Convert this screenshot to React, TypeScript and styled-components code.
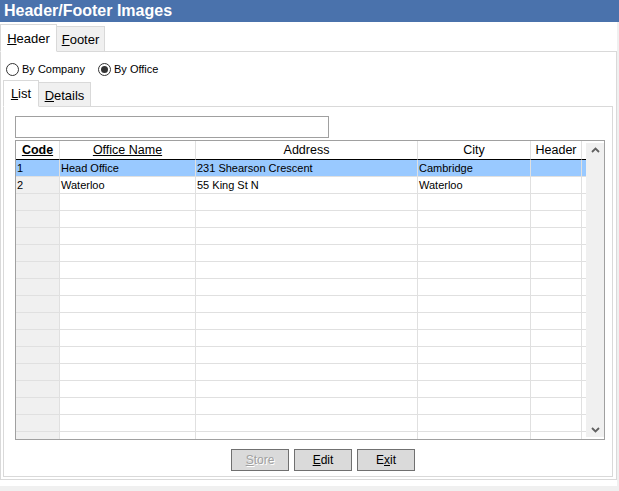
import React from "react";
import styled, { createGlobalStyle } from "styled-components";

const Global = createGlobalStyle`
  html, body { margin: 0; padding: 0; background: #ffffff; }
  body { font-family: "Liberation Sans", Arial, sans-serif; color: #000; }
  * { box-sizing: border-box; }
`;

const Page = styled.div`
  width: 619px;
  height: 491px;
  background: #f0f0f0;
  display: flex;
  flex-direction: column;
  overflow: hidden;
`;

const TitleBar = styled.div`
  height: 22px;
  background: #4a72ac;
  color: #fff;
  font-weight: bold;
  font-size: 16px;
  line-height: 22px;
  padding-left: 4px;
  white-space: nowrap;
`;

const Window = styled.div`
  width: 617px;
  height: 464px;
  background: #fff;
  display: flex;
  flex-direction: column;
`;

const TabStrip = styled.div<{ $h: number }>`
  display: flex;
  align-items: flex-end;
  height: ${(p) => p.$h}px;
  flex: none;
`;

const Tab = styled.div<{ $active?: boolean; $w: number; $h: number; $first?: boolean; $fs: number }>`
  width: ${(p) => p.$w}px;
  height: ${(p) => p.$h}px;
  background: ${(p) => (p.$active ? "#fff" : "#f0f0f0")};
  border-top: 1px solid #d9d9d9;
  border-right: 1px solid #d9d9d9;
  border-left: ${(p) => (p.$first ? "1px solid #d9d9d9" : "none")};
  border-bottom: 1px solid ${(p) => (p.$active ? "#fff" : "#d9d9d9")};
  font-size: ${(p) => p.$fs}px;
  display: flex;
  align-items: center;
  justify-content: center;
  padding-top: ${(p) => (p.$active ? 0 : 1)}px;
  white-space: nowrap;
`;

const TabFiller = styled.div`
  flex: 1;
  height: 1px;
  border-bottom: 1px solid #d9d9d9;
`;

const OuterPanel = styled.div`
  height: 428px;
  border: 1px solid #d9d9d9;
  border-top: none;
  padding: 0 3px 2px 2px;
  display: flex;
  flex-direction: column;
`;

const RadioRow = styled.div`
  display: flex;
  align-items: center;
  height: 14px;
  margin: 10px 0 4px 3px;
  font-size: 11px;
`;

const RadioItem = styled.label`
  display: flex;
  align-items: center;
  gap: 3px;
  margin-right: 13px;
`;

const RadioCircle = styled.span<{ $checked?: boolean }>`
  width: 13px;
  height: 13px;
  border-radius: 50%;
  border: 1px solid #333;
  background: #fff;
  display: flex;
  align-items: center;
  justify-content: center;
  &::after {
    content: "";
    width: 7px;
    height: 7px;
    border-radius: 50%;
    background: ${(p) => (p.$checked ? "#333" : "transparent")};
  }
`;

const InnerPanel = styled.div`
  flex: 1;
  border: 1px solid #d9d9d9;
  border-top: none;
  padding: 9px 0 0 11px;
  display: flex;
  flex-direction: column;
`;

const SearchInput = styled.div`
  width: 314px;
  height: 22px;
  border: 1px solid #a0a0a0;
  background: #fff;
  flex: none;
`;

const Grid = styled.div`
  margin-top: 2px;
  width: 590px;
  height: 300px;
  border: 1px solid #a0a0a0;
  display: flex;
  flex: none;
  overflow: hidden;
`;

const Table = styled.div`
  width: 570px;
  display: grid;
  grid-template-columns: 44px 136px 222px 113px 51px 4px;
  grid-auto-rows: 17px;
  grid-template-rows: 19px;
  align-content: start;
  overflow: hidden;
`;

const HeadCell = styled.div<{ $bold?: boolean; $u?: boolean; $last?: boolean }>`
  border-right: ${(p) => (p.$last ? "none" : "1px solid #e0e0e0")};
  border-bottom: 1px solid #000;
  font-size: 12.5px;
  font-weight: ${(p) => (p.$bold ? "bold" : "normal")};
  text-decoration: ${(p) => (p.$u ? "underline" : "none")};
  display: flex;
  align-items: center;
  justify-content: center;
  white-space: nowrap;
  overflow: hidden;
  background: #fff;
`;

const Cell = styled.div<{ $sel?: boolean; $fixed?: boolean; $last?: boolean }>`
  border-right: ${(p) => (p.$last ? "none" : "1px solid #e0e0e0")};
  border-bottom: 1px solid #e0e0e0;
  background: ${(p) => (p.$sel ? "#99c9ff" : p.$fixed ? "#f0f0f0" : "#fff")};
  font-size: 11px;
  line-height: 16px;
  padding-left: 1px;
  white-space: nowrap;
  overflow: hidden;
`;

const ScrollTrack = styled.div`
  width: 18px;
  margin: 2px 0 2px 0;
  background: #f0f0f0;
  display: flex;
  flex-direction: column;
  justify-content: space-between;
  align-items: center;
  padding: 4px 0;
`;

const ButtonRow = styled.div`
  display: flex;
  gap: 5px;
  margin-top: 9px;
  padding-left: 216px;
`;

const Button = styled.div<{ $disabled?: boolean }>`
  width: 58px;
  height: 22px;
  background: #dadada;
  border: 1px solid #707070;
  font-size: 12px;
  display: flex;
  align-items: center;
  justify-content: center;
  color: ${(p) => (p.$disabled ? "#a0a0a0" : "#000")};
  text-shadow: ${(p) => (p.$disabled ? "1px 1px 0 #fff" : "none")};
`;

const U = styled.span`
  text-decoration: underline;
`;

const Chevron = ({ up }: { up?: boolean }) => (
  <svg width="9" height="6" viewBox="0 0 9 6">
    <path
      d={up ? "M1 5 L4.5 1.5 L8 5" : "M1 1 L4.5 4.5 L8 1"}
      fill="none"
      stroke="#606060"
      strokeWidth="1.8"
    />
  </svg>
);

type Row = { code: string; name: string; address: string; city: string; header: string };
const rows: Row[] = [
  { code: "1", name: "Head Office", address: "231 Shearson Crescent", city: "Cambridge", header: "" },
  { code: "2", name: "Waterloo", address: "55 King St N", city: "Waterloo", header: "" },
];

export default function App() {
  const blanks = Array.from({ length: 15 });
  return (
    <>
      <Global />
      <Page>
        <TitleBar>Header/Footer Images</TitleBar>
        <Window>
          <TabStrip $h={30}>
            <Tab $active $first $w={57} $h={28} $fs={13}>
              <span><U>H</U>eader</span>
            </Tab>
            <Tab $w={48} $h={26} $fs={13}>
              <span><U>F</U>ooter</span>
            </Tab>
            <TabFiller />
          </TabStrip>
          <OuterPanel>
            <RadioRow>
              <RadioItem>
                <RadioCircle />
                By Company
              </RadioItem>
              <RadioItem>
                <RadioCircle $checked />
                By Office
              </RadioItem>
            </RadioRow>
            <TabStrip $h={27}>
              <Tab $active $first $w={36} $h={27} $fs={13}>
                <span><U>L</U>ist</span>
              </Tab>
              <Tab $w={52} $h={25} $fs={13}>
                <span><U>D</U>etails</span>
              </Tab>
              <TabFiller />
            </TabStrip>
            <InnerPanel>
              <SearchInput />
              <Grid>
                <Table>
                  <HeadCell $bold $u>Code</HeadCell>
                  <HeadCell $u>Office Name</HeadCell>
                  <HeadCell>Address</HeadCell>
                  <HeadCell>City</HeadCell>
                  <HeadCell>Header</HeadCell>
                  <HeadCell $last />
                  {rows.map((r, i) => {
                    const sel = i === 0;
                    return (
                      <React.Fragment key={r.code}>
                        <Cell $sel={sel} $fixed>{r.code}</Cell>
                        <Cell $sel={sel}>{r.name}</Cell>
                        <Cell $sel={sel}>{r.address}</Cell>
                        <Cell $sel={sel}>{r.city}</Cell>
                        <Cell $sel={sel}>{r.header}</Cell>
                        <Cell $sel={sel} $last />
                      </React.Fragment>
                    );
                  })}
                  {blanks.map((_, i) => (
                    <React.Fragment key={i}>
                      <Cell $fixed />
                      <Cell />
                      <Cell />
                      <Cell />
                      <Cell />
                      <Cell $last />
                    </React.Fragment>
                  ))}
                </Table>
                <ScrollTrack>
                  <Chevron up />
                  <Chevron />
                </ScrollTrack>
              </Grid>
              <ButtonRow>
                <Button $disabled><span><U>S</U>tore</span></Button>
                <Button><span><U>E</U>dit</span></Button>
                <Button><span>E<U>x</U>it</span></Button>
              </ButtonRow>
            </InnerPanel>
          </OuterPanel>
        </Window>
      </Page>
    </>
  );
}
